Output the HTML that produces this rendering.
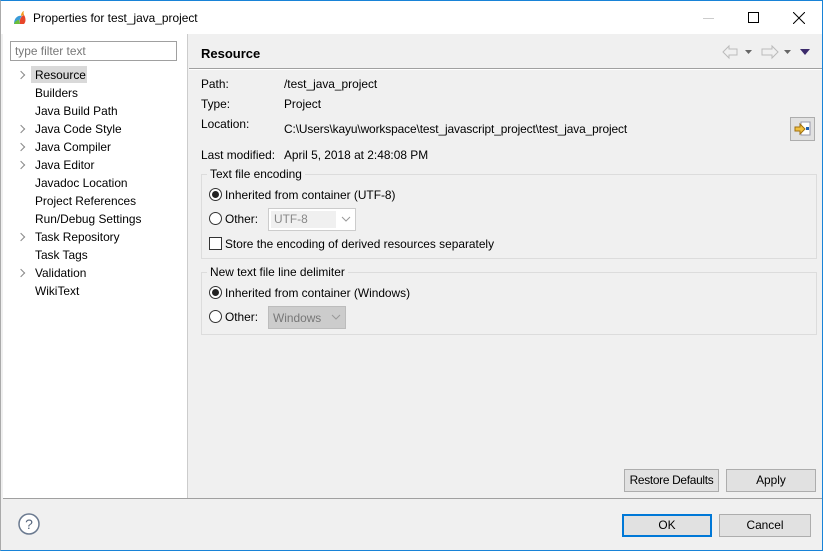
<!DOCTYPE html>
<html><head><style>
*{margin:0;padding:0;box-sizing:border-box}
body{width:827px;height:555px;background:#fff;font-family:"Liberation Sans",sans-serif;font-size:11.9px;color:#000;position:relative;overflow:hidden}
.a{position:absolute;white-space:nowrap}
.btn{position:absolute;background:#e1e1e1;border:1px solid #adadad;text-align:center;line-height:20px}
.radio{position:absolute;width:13px;height:13px;border:1px solid #333;border-radius:50%;background:#fff}
.radio.on::after{content:"";position:absolute;left:2px;top:2px;width:7px;height:7px;border-radius:50%;background:#222}
.chev{position:absolute;width:6px;height:6px;border-right:1.3px solid #888;border-top:1.3px solid #888;transform:rotate(45deg)}
</style></head><body>
<div class="a" style="left:0;top:0;width:823px;height:551px;border:1px solid #1883d7;border-left:1px solid #aaa;background:#f0f0f0"></div>
<div class="a" style="left:1px;top:1px;width:821px;height:33px;background:#fff"></div>
<svg class="a" style="left:12px;top:10px" width="16" height="16" viewBox="0 0 16 16"><path d="M2 14 C2 8 6 5 10 6 C8 8 7 11 8 14Z" fill="#3a9bd8"/><path d="M8 14 C7 10 9 6 12 5 C14 8 14 12 12 14Z" fill="#e8462a"/><path d="M9 6 C9 3 11 1 12 1 C11 3 12 4 12 5Z" fill="#f39a1e"/><path d="M2 14 C3 11 5 10 7 10 L8 14Z" fill="#6bbf3a"/></svg>
<div class="a" style="left:33px;top:11px">Properties for test_java_project</div>
<div class="a" style="left:703px;top:18px;width:11px;height:1px;background:#ccc"></div>
<div class="a" style="left:748px;top:12px;width:11px;height:11px;border:1px solid #000"></div>
<svg class="a" style="left:793px;top:12px" width="12" height="12"><path d="M0 0L12 12M12 0L0 12" stroke="#000" stroke-width="1"/></svg>
<div class="a" style="left:3px;top:34px;width:185px;height:464px;background:#fff;border-right:1px solid #ccc"></div>
<div class="a" style="left:10px;top:41px;width:167px;height:20px;border:1px solid #a0a0a0;background:#fff;color:#777;padding:2px 0 0 4px">type filter text</div>
<div class="a" style="left:31px;top:66px;width:56px;height:17px;background:#d9d9d9"></div>
<div class="chev" style="left:18px;top:72px"></div>
<div class="chev" style="left:18px;top:126px"></div>
<div class="chev" style="left:18px;top:144px"></div>
<div class="chev" style="left:18px;top:162px"></div>
<div class="chev" style="left:18px;top:234px"></div>
<div class="chev" style="left:18px;top:270px"></div>
<div class="a" style="left:35px;top:66px;line-height:18px">Resource<br>Builders<br>Java Build Path<br>Java Code Style<br>Java Compiler<br>Java Editor<br>Javadoc Location<br>Project References<br>Run/Debug Settings<br>Task Repository<br>Task Tags<br>Validation<br>WikiText</div>
<div class="a" style="left:201px;top:46px;font-weight:bold;font-size:13px">Resource</div>
<div class="a" style="left:189px;top:68px;width:633px;height:2px;background:#a0a0a0;border-bottom:1px solid #fff"></div>
<svg class="a" style="left:720px;top:44px" width="95" height="16"><path d="M3 8 L9 2 V5 H17 V11 H9 V14Z" fill="none" stroke="#bbb"/><path d="M25 6h7l-3.5 4z" fill="#666"/><path d="M58 8 L52 2 V5 H42 V11 H52 V14Z" fill="none" stroke="#bbb"/><path d="M64 6h7l-3.5 4z" fill="#666"/><path d="M80 5h10l-5 6z" fill="#3b2a6b"/></svg>
<div class="a" style="left:201px;top:77px">Path:</div><div class="a" style="left:284px;top:77px">/test_java_project</div>
<div class="a" style="left:201px;top:97px">Type:</div><div class="a" style="left:284px;top:97px">Project</div>
<div class="a" style="left:201px;top:117px">Location:</div><div class="a" style="left:284px;top:122px;letter-spacing:-0.1px">C:\Users\kayu\workspace\test_javascript_project\test_java_project</div>
<div class="a" style="left:790px;top:117px;width:25px;height:24px;border:1px solid #adadad;background:#e1e1e1"></div>
<svg class="a" style="left:794px;top:121px" width="18" height="16"><rect x="7" y="1" width="9" height="13" fill="#fff" stroke="#99a"/><path d="M1 6h5V3l5 5-5 5V10H1z" fill="#f0c040" stroke="#a07010"/><rect x="12" y="6" width="3" height="3" fill="#2060b0"/></svg>
<div class="a" style="left:201px;top:148px">Last modified:</div><div class="a" style="left:284px;top:148px">April 5, 2018 at 2:48:08 PM</div>
<div class="a" style="left:201px;top:174px;width:616px;height:85px;border:1px solid #dcdcdc"></div>
<div class="a" style="left:207px;top:167px;background:#f0f0f0;padding:0 3px">Text file encoding</div>
<div class="radio on" style="left:209px;top:188px"></div><div class="a" style="left:225px;top:188px">Inherited from container (UTF-8)</div>
<div class="radio" style="left:209px;top:212px"></div><div class="a" style="left:225px;top:212px">Other:</div>
<div class="a" style="left:268px;top:208px;width:88px;height:23px;border:1px solid #ccc;background:#fff"></div>
<div class="a" style="left:271px;top:211px;width:65px;height:17px;background:#f0f0f0;color:#888;padding:1px 0 0 3px">UTF-8</div>
<svg class="a" style="left:341px;top:216px" width="10" height="6"><path d="M1 1l4 4 4-4" fill="none" stroke="#999"/></svg>
<div class="a" style="left:209px;top:237px;width:13px;height:13px;border:1px solid #333;background:#fff"></div>
<div class="a" style="left:225px;top:237px">Store the encoding of derived resources separately</div>
<div class="a" style="left:201px;top:272px;width:616px;height:63px;border:1px solid #dcdcdc"></div>
<div class="a" style="left:207px;top:265px;background:#f0f0f0;padding:0 3px">New text file line delimiter</div>
<div class="radio on" style="left:209px;top:286px"></div><div class="a" style="left:225px;top:286px">Inherited from container (Windows)</div>
<div class="radio" style="left:209px;top:310px"></div><div class="a" style="left:225px;top:310px">Other:</div>
<div class="a" style="left:268px;top:306px;width:78px;height:23px;border:1px solid #bcbcbc;background:#ccc;color:#777;padding:4px 0 0 4px">Windows</div>
<svg class="a" style="left:331px;top:314px" width="10" height="6"><path d="M1 1l4 4 4-4" fill="none" stroke="#999"/></svg>
<div class="btn" style="left:624px;top:469px;width:95px;height:23px;letter-spacing:-0.3px">Restore Defaults</div>
<div class="btn" style="left:726px;top:469px;width:90px;height:23px">Apply</div>
<div class="a" style="left:3px;top:498px;width:819px;height:1px;background:#a0a0a0"></div>
<svg class="a" style="left:17px;top:512px" width="24" height="24"><circle cx="12" cy="12" r="10" fill="#fff" stroke="#6b7a90" stroke-width="1.5"/><text x="12" y="17" font-size="14" text-anchor="middle" fill="#55657c" font-family="Liberation Sans">?</text></svg>
<div class="btn" style="left:622px;top:514px;width:90px;height:23px;border:2px solid #0078d7;line-height:19px">OK</div>
<div class="btn" style="left:719px;top:514px;width:92px;height:23px">Cancel</div>
</body></html>
